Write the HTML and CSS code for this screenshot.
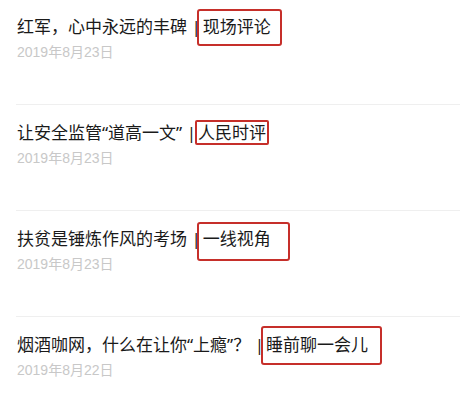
FILE: index.html
```html
<!DOCTYPE html>
<html lang="zh">
<head>
<meta charset="utf-8">
<link rel="stylesheet" href="styles.css">
</head>
<body>
<ul class="list">
  <li class="item">
    <div class="title">红军，心中永远的丰碑 |<span class="tag tag-1">现场评论</span></div>
    <div class="date">2019年8月23日</div>
  </li>
  <li class="item">
    <div class="title">让安全监管“道高一文” |<span class="tag tag-2">人民时评</span></div>
    <div class="date">2019年8月23日</div>
  </li>
  <li class="item">
    <div class="title">扶贫是锤炼作风的考场 |<span class="tag tag-3">一线视角</span></div>
    <div class="date">2019年8月23日</div>
  </li>
  <li class="item">
    <div class="title">烟酒咖网，什么在让你“上瘾”？ |<span class="tag tag-4">睡前聊一会儿</span></div>
    <div class="date">2019年8月22日</div>
  </li>
</ul>
</body>
</html>
```
FILE: styles.css
```css
html, body {
  margin: 0;
  padding: 0;
  background: #fff;
}
body {
  font-family: "Noto Sans", "Noto Sans CJK SC", sans-serif;
  width: 460px;
  height: 400px;
  overflow: hidden;
}
.list {
  list-style: none;
  margin: 0;
  padding: 0 0 0 16px;
}
.item {
  padding: 16px 0 42px 1px;
  border-bottom: 1px solid #efefef;
  display: flex;
  flex-direction: column;
  gap: 3px;
}
.item:first-child {
  padding-top: 15px;
}
.item:last-child {
  border-bottom: none;
  padding-bottom: 10px;
}
.title {
  font-size: 17px;
  line-height: 24px;
  color: #1a1a1a;
  white-space: nowrap;
}
.date {
  font-family: "Liberation Sans", "Noto Sans CJK SC", sans-serif;
  font-size: 14px;
  line-height: 20px;
  color: #c8c8c8;
}
.tag {
  position: relative;
  margin-left: 2px;
}
.tag::after {
  content: "";
  position: absolute;
  border: 2.5px solid #c62f2a;
  border-radius: 3px;
}
.tag-1::after { left: -6px; right: -11px; top: -6px; bottom: -8px; }
.tag-2::after { left: -3px; right: -3px; top: -1px; bottom: -1px; border-radius: 2px; }
.tag-3::after { left: -6px; right: -19px; top: -5px; bottom: -11px; }
.tag-4::after { left: -5px; right: -14px; top: -7px; bottom: -9px; }
```
